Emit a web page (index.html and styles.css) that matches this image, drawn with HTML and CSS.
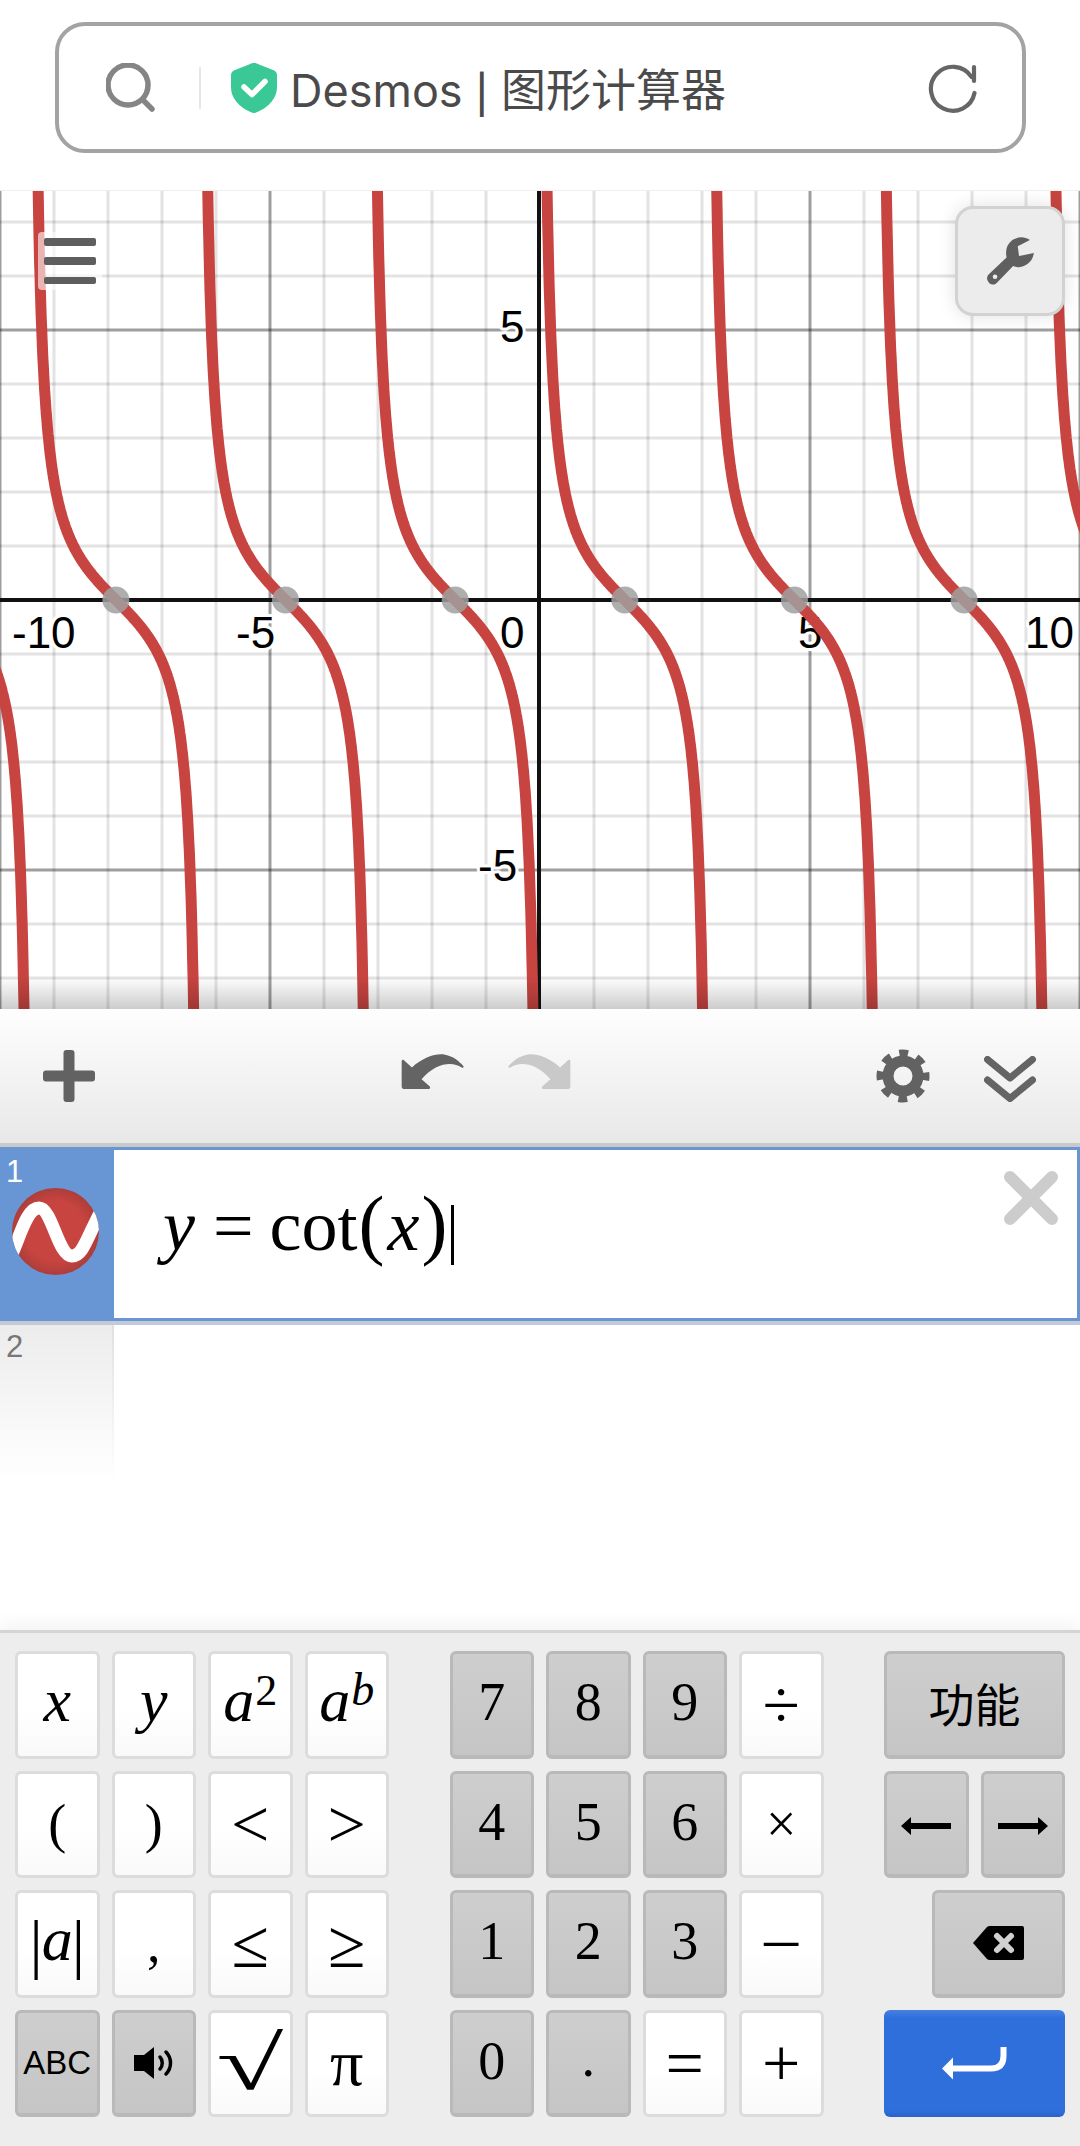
FILE: index.html
```html
<!DOCTYPE html>
<html lang="zh">
<head>
    <meta charset="UTF-8">
    <meta name="viewport" content="width=device-width, initial-scale=1.0">
    <title>Desmos | 图形计算器</title>
    <link rel="stylesheet" href="styles.css">
</head>
<body>
    <div class="top-bar">
        <div class="search-box">
            <svg class="icon-search" viewBox="0 0 50 50"><circle cx="22" cy="22" r="20" /><path d="M37 37 L46 46" /></svg>
            <div class="search-divider"></div>
            <svg class="icon-shield" viewBox="0 0 46 50">
                <path d="M23 0 C25 0 26 .5 28 1.5 L42 7 C44.5 8 46 9.5 46 12 L46 24 C46 37 35 46 24.5 49.7 C23.5 50 22.5 50 21.5 49.7 C11 46 0 37 0 24 L0 12 C0 9.5 1.5 8 4 7 L18 1.5 C20 .5 21 0 23 0Z" />
                <polyline points="13,24 21,31.5 34,18.5" />
            </svg>
            <div class="search-text">Desmos <span class="search-pipe">|</span> 图形计算器</div>
            <svg class="icon-refresh" viewBox="0 0 50 52"><path d="M47.5 31 A22 22 0 1 1 44.5 15" /><path d="M47 5 V19" /></svg>
        </div>
    </div>

    <div class="graph" id="graph">
        <div class="menu-btn">
            <span></span><span></span><span></span>
        </div>
        <div class="wrench-btn">
            <svg class="icon-wrench" viewBox="314 672 148 152">
                <path d="M322 788 L376 737 C371 712 380 692 398 682 C414 673 432 674 447 684 L410 703 L414 733 L459 724 C456 745 442 760 424 765 C414 768 404 767 396 763 L346 815 C338 823 328 820 322 813 C315 805 315 796 322 788Z" />
                <circle cx="341" cy="796" r="7" />
            </svg>
        </div>
    </div>

    <div class="toolbar">
        <svg class="icon-plus" viewBox="0 0 52 52"><rect x="20.5" y="0" width="11" height="52" rx="3" /><rect x="0" y="20.5" width="52" height="11" rx="3" /></svg>
        <svg class="icon-undo" viewBox="60 72 190 110"><path d="M68 92 L93 115 C125 85 165 72 190 76 C215 80 235 95 249 112 C249 116 245 117 243 115 C215 95 165 100 122 150 L147 172 C149 176 147 180 143 180 L70 180 C65 180 62 176 62 172 L62 96 C62 92 65 90 68 92Z" /></svg>
        <svg class="icon-redo" viewBox="60 72 190 110"><path d="M68 92 L93 115 C125 85 165 72 190 76 C215 80 235 95 249 112 C249 116 245 117 243 115 C215 95 165 100 122 150 L147 172 C149 176 147 180 143 180 L70 180 C65 180 62 176 62 172 L62 96 C62 92 65 90 68 92Z" /></svg>
        <svg class="icon-gear" viewBox="0 0 54 54">
            <circle class="gear-body" cx="27" cy="27" r="15" />
            <circle class="gear-teeth" cx="27" cy="27" r="23" />
        </svg>
        <svg class="icon-chevrons" viewBox="0 0 52 46">
            <polyline points="3.5,3.5 26,22 48.5,3.5" />
            <polyline points="3.5,24 26,42.5 48.5,24" />
        </svg>
    </div>

    <div class="expressions">
        <div class="expr-row expr-active">
            <div class="expr-tab">
                <div class="expr-num">1</div>
                <svg class="expr-logo" viewBox="0 0 87 87">
                    <defs>
                        <radialGradient id="logoFill">
                            <stop offset="70%" stop-color="#c74440" />
                            <stop offset="100%" stop-color="#ad3d3a" />
                        </radialGradient>
                        <clipPath id="logoClip"><circle cx="43.5" cy="43.5" r="43.5" /></clipPath>
                    </defs>
                    <circle cx="43.5" cy="43.5" r="43.5" fill="url(#logoFill)" />
                    <path clip-path="url(#logoClip)" d="M-2 70 C8 50 14 20 27 20 C40 20 46 68 60 68 C72 68 76 45 92 18" />
                </svg>
            </div>
            <div class="expr-body">
                <div class="math">
                    <i>y</i><span class="math-eq">=</span><span>cot</span><span class="math-paren math-open">(</span><i>x</i><span class="math-paren math-close">)</span><span class="math-cursor"></span>
                </div>
                <svg class="icon-close" viewBox="0 0 54 54"><path d="M6 6 L48 48 M48 6 L6 48" /></svg>
            </div>
        </div>
        <div class="expr-row expr-empty">
            <div class="expr-tab">
                <div class="expr-num">2</div>
            </div>
            <div class="expr-body"></div>
        </div>
    </div>

    <div class="keypad">
        <div class="key-group key-group-4">
            <div class="key key-light"><i>x</i></div>
            <div class="key key-light"><i>y</i></div>
            <div class="key key-light"><i>a</i><sup>2</sup></div>
            <div class="key key-light"><i>a</i><sup><i>b</i></sup></div>

            <div class="key key-light">(</div>
            <div class="key key-light">)</div>
            <div class="key key-light key-op">&lt;</div>
            <div class="key key-light key-op">&gt;</div>

            <div class="key key-light key-abs"><span>|</span><i>a</i><span>|</span></div>
            <div class="key key-light">,</div>
            <div class="key key-light key-op">≤</div>
            <div class="key key-light key-op">≥</div>

            <div class="key key-dark key-abc">ABC</div>
            <div class="key key-dark">
                <svg class="icon-speaker" viewBox="0 0 40 32">
                    <path class="speaker-cone" d="M0 8 H10 L20 0 V32 L10 24 H0Z" />
                    <path class="speaker-wave" d="M26 10 C29 13 29 19 26 22 M32 5 C38 11 38 21 32 27" />
                </svg>
            </div>
            <div class="key key-light key-sqrt"><span>√</span></div>
            <div class="key key-light key-pi">π</div>
        </div>

        <div class="key-group key-group-4">
            <div class="key key-dark key-num">7</div>
            <div class="key key-dark key-num">8</div>
            <div class="key key-dark key-num">9</div>
            <div class="key key-light key-op">÷</div>

            <div class="key key-dark key-num">4</div>
            <div class="key key-dark key-num">5</div>
            <div class="key key-dark key-num">6</div>
            <div class="key key-light key-times">×</div>

            <div class="key key-dark key-num">1</div>
            <div class="key key-dark key-num">2</div>
            <div class="key key-dark key-num">3</div>
            <div class="key key-light key-op key-minus"><span>−</span></div>

            <div class="key key-dark key-num">0</div>
            <div class="key key-dark key-num key-dot">.</div>
            <div class="key key-light key-op">=</div>
            <div class="key key-light key-op">+</div>
        </div>

        <div class="key-group key-group-2">
            <div class="key key-dark key-wide key-func">功能</div>

            <div class="key key-dark">
                <svg class="icon-arrow" viewBox="0 0 50 20"><path d="M0 10 L10 1 V7 H50 V13 H10 V19Z" /></svg>
            </div>
            <div class="key key-dark">
                <svg class="icon-arrow" viewBox="0 0 50 20"><path d="M50 10 L40 1 V7 H0 V13 H40 V19Z" /></svg>
            </div>

            <div class="key key-dark key-backspace">
                <svg class="icon-backspace" viewBox="0 0 51 34">
                    <path d="M0 17 L14 1 Q15 0 17 0 H49 Q51 0 51 2 V32 Q51 34 49 34 H17 Q15 34 14 33Z" />
                    <path class="backspace-x" d="M24 10 L38 24 M38 10 L24 24" />
                </svg>
            </div>

            <div class="key key-enter key-wide">
                <svg class="icon-enter" viewBox="0 0 65 33">
                    <path class="enter-line" d="M61.5 0 V9 Q61.5 21.5 49 21.5 H8" />
                    <path class="enter-head" d="M0 21.5 L11 10.5 V32.5Z" />
                </svg>
            </div>
        </div>
    </div>

    <script src="graph.js"></script>
</body>
</html>
```

FILE: styles.css
```css
* {
    margin: 0;
    padding: 0;
    box-sizing: border-box;
}

html, body {
    height: 2146px;
    overflow: hidden;
}

body {
    display: flex;
    flex-direction: column;
    background: #ffffff;
    font-family: "Liberation Serif", "Noto Sans CJK SC", serif;
    color: #000000;
}

/* browser address bar */
.top-bar {
    height: 190px;
    padding: 22px 54px 0 55px;
    flex-shrink: 0;
}

.search-box {
    height: 131px;
    border: 4px solid #a3a3a3;
    border-radius: 30px;
    display: flex;
    align-items: center;
    padding-left: 47px;
}

.icon-search {
    width: 50px;
    height: 50px;
    fill: none;
    stroke: #858585;
    stroke-width: 5.5;
    stroke-linecap: round;
}

.search-divider {
    width: 2px;
    height: 42px;
    margin-left: 43px;
    background: #e6e6e6;
}

.icon-shield {
    width: 46px;
    height: 50px;
    margin-left: 30px;
}

.icon-shield path {
    fill: #3ac996;
}

.icon-shield polyline {
    fill: none;
    stroke: #ffffff;
    stroke-width: 5.5;
    stroke-linecap: round;
    stroke-linejoin: round;
}

.search-text {
    margin-left: 13px;
    font-family: "Inter", "Noto Sans CJK SC", sans-serif;
    font-size: 45px;
    font-weight: 400;
    color: #4a4a4a;
    white-space: nowrap;
}

.search-pipe {
    font-size: 38px;
    font-weight: 500;
    position: relative;
    top: 1px;
}

.icon-refresh {
    width: 50px;
    height: 52px;
    margin-left: auto;
    margin-right: 45px;
    fill: none;
    stroke: #666666;
    stroke-width: 4.2;
    stroke-linecap: round;
}

/* graph paper */
.graph {
    position: relative;
    height: 819px;
    flex-shrink: 0;
    overflow: hidden;
    border-top: 1px solid #eeeeee;
}

.graph svg.paper {
    display: block;
}

.graph::after {
    content: '';
    position: absolute;
    left: 0;
    right: 0;
    bottom: 0;
    height: 32px;
    background: linear-gradient(180deg, rgba(0, 0, 0, 0), rgba(0, 0, 0, 0.2));
}

.menu-btn {
    position: absolute;
    left: 38px;
    top: 41px;
    width: 64px;
    height: 58px;
    padding: 6px;
    display: flex;
    flex-direction: column;
    justify-content: space-between;
    background: rgba(255, 255, 255, 0.6);
    border-radius: 4px;
}

.menu-btn span {
    display: block;
    height: 7.5px;
    background: #5e5e5e;
    border-radius: 2px;
}

.wrench-btn {
    position: absolute;
    left: 955px;
    top: 15px;
    width: 110px;
    height: 110px;
    display: flex;
    align-items: center;
    justify-content: center;
    background: #ececec;
    border: 3px solid #d2d2d2;
    border-radius: 18px;
    box-shadow: 0 0 18px rgba(0, 0, 0, 0.12);
}

.icon-wrench {
    width: 49px;
    height: 50px;
}

.icon-wrench path {
    fill: #5f5f5f;
}

.icon-wrench circle {
    fill: #ececec;
}

/* expression list toolbar */
.toolbar {
    height: 138px;
    flex-shrink: 0;
    display: flex;
    align-items: center;
    background: linear-gradient(180deg, #fefefe, #e8e8e8);
    border-bottom: 4px solid #c9c9c9;
}

.icon-plus {
    width: 52px;
    height: 52px;
    margin-left: 43px;
    fill: #626262;
}

.icon-undo,
.icon-redo {
    width: 63px;
    height: 37px;
    margin-bottom: 9px;
}

.icon-undo {
    margin-left: 306px;
    fill: #646464;
}

.icon-redo {
    margin-left: 44px;
    fill: #c9c9c9;
    transform: scaleX(-1);
}

.icon-gear {
    width: 54px;
    height: 54px;
    margin-left: 305px;
    fill: none;
    stroke: #626262;
}

.gear-body {
    stroke-width: 11;
}

.gear-teeth {
    stroke-width: 7;
    stroke-dasharray: 9 9.06;
    stroke-dashoffset: 4.5;
}

.icon-chevrons {
    width: 52px;
    height: 46px;
    margin-left: 54px;
    margin-top: 6px;
    fill: none;
    stroke: #646464;
    stroke-width: 7;
    stroke-linecap: round;
    stroke-linejoin: round;
}

/* expressions */
.expressions {
    flex: 1;
    display: flex;
    flex-direction: column;
}

.expr-row {
    display: flex;
}

.expr-active {
    height: 178px;
    background: #6895d4;
    border-bottom: 4px solid #c2cad8;
    padding: 3px 3px 3px 0;
}

.expr-active .expr-tab {
    width: 114px;
    margin-top: -3px;
    position: relative;
}

.expr-active .expr-body {
    flex: 1;
    background: #ffffff;
    position: relative;
    padding-left: 49px;
}

.expr-num {
    font-family: "Liberation Sans", sans-serif;
    font-size: 31px;
    line-height: 30px;
    padding: 10px 0 0 6px;
    color: #ffffff;
}

.expr-logo {
    position: absolute;
    left: 12px;
    top: 41px;
    width: 87px;
    height: 87px;
}

.expr-logo path {
    fill: none;
    stroke: #ffffff;
    stroke-width: 13;
}

.expr-empty {
    height: 155px;
}

.expr-empty .expr-tab {
    width: 114px;
    background: linear-gradient(180deg, #ececec, #ffffff);
    border-right: 2px solid #e4e4e4;
    border-image: linear-gradient(180deg, #e0e0e0, #ffffff) 1;
}

.expr-empty .expr-num {
    color: #777777;
    padding-top: 7px;
}

.math {
    display: flex;
    align-items: baseline;
    height: 100%;
    padding-top: 24px;
    font-size: 72px;
    line-height: 100px;
    white-space: nowrap;
}

.math-eq {
    margin: 0 16px 0 18px;
}

.math-paren {
    font-size: 78px;
}

.math-open {
    margin: 0 3px 0 1px;
}

.math-close {
    margin: 0 4px 0 2px;
}

.math-cursor {
    width: 3px;
    height: 60px;
    background: #000000;
    align-self: center;
    margin-bottom: 22px;
}

.icon-close {
    position: absolute;
    left: 890px;
    top: 21px;
    width: 54px;
    height: 54px;
    fill: none;
    stroke: #cccccc;
    stroke-width: 12;
    stroke-linecap: round;
}

/* math keypad */
.keypad {
    height: 516px;
    flex-shrink: 0;
    display: flex;
    justify-content: space-between;
    padding: 18px 15px 0 15px;
    background: #ededed;
    border-top: 3px solid #d5d5d5;
    box-shadow: 0 -6px 16px rgba(0, 0, 0, 0.05);
}

.key-group {
    display: grid;
    gap: 12px;
    grid-auto-rows: 107.5px;
    align-content: start;
}

.key-group-4 {
    grid-template-columns: repeat(4, 84.5px);
}

.key-group-2 {
    grid-template-columns: repeat(2, 84.5px);
}

.key {
    display: flex;
    align-items: center;
    justify-content: center;
    border-radius: 6px;
    font-size: 54px;
    line-height: 1;
    color: #000000;
}

.key-light {
    background: linear-gradient(180deg, #ffffff 55%, #f9f9f9);
    border: 3px solid #dcdcdc;
}

.key-dark {
    background: linear-gradient(180deg, #cecece, #c5c5c5);
    border: 3px solid #b9b9b9;
    border-bottom-width: 4px;
}

.key-num {
    padding-bottom: 4px;
}

.key-dot {
    padding-bottom: 10px;
}

.key i {
    font-size: 62px;
    position: relative;
    top: -5px;
}

.key sup {
    font-size: 44px;
    line-height: 0;
    position: relative;
    top: -14px;
    margin-left: 1px;
}

.key sup i {
    font-size: 46px;
    top: 0;
}

.key-op {
    font-size: 68px;
}

.key-minus span {
    display: inline-block;
    transform: scaleX(1.1);
}

.key-times {
    font-size: 54px;
}

.key-abs span {
    font-size: 66px;
    margin: 0 -1px;
    font-weight: 300;
}

.key-abc {
    font-family: "Liberation Sans", sans-serif;
    font-size: 33px;
}

.key-sqrt span {
    display: inline-block;
    font-size: 76px;
    transform: scaleX(1.6);
}

.key-pi {
    font-size: 66px;
}

.key-wide {
    grid-column: span 2;
}

.key-func {
    font-family: "Noto Sans CJK SC", sans-serif;
    font-size: 46px;
    padding-bottom: 4px;
}

.key-backspace {
    grid-column: span 2;
    justify-self: end;
    width: 133px;
}

.key-enter {
    background: linear-gradient(180deg, #4a80e0 0, #2f6fdc 8px, #2f6fdc 94%, #2a62c8);
    border-radius: 6px;
}

.icon-speaker {
    width: 40px;
    height: 32px;
}

.speaker-cone {
    fill: #000000;
}

.speaker-wave {
    fill: none;
    stroke: #000000;
    stroke-width: 3.5;
    stroke-linecap: round;
}

.icon-arrow {
    width: 50px;
    height: 20px;
    margin-top: 5px;
    fill: #000000;
}

.icon-backspace {
    width: 51px;
    height: 34px;
    fill: #000000;
}

.backspace-x {
    fill: none;
    stroke: #d0d0d0;
    stroke-width: 6;
    stroke-linecap: round;
}

.icon-enter {
    width: 65px;
    height: 33px;
}

.enter-line {
    fill: none;
    stroke: #ffffff;
    stroke-width: 6;
}

.enter-head {
    fill: #ffffff;
}

/* drawn by graph.js */
.grid-minor {
    stroke: rgba(0, 0, 0, 0.11);
    stroke-width: 3;
}

.grid-major {
    stroke: rgba(0, 0, 0, 0.38);
    stroke-width: 3;
}

.axis {
    stroke: #111111;
    stroke-width: 4;
}

.curve {
    fill: none;
    stroke: #c74440;
    stroke-width: 11;
    stroke-linejoin: round;
}

.zero-dot {
    fill: #a0a0a0;
    opacity: 0.85;
}

.tick {
    font-family: "Liberation Sans", sans-serif;
    font-size: 44px;
    fill: #000000;
    stroke: #ffffff;
    stroke-width: 6px;
    stroke-linejoin: round;
    paint-order: stroke;
}
```

FILE: graph.js
```js
// y = cot(x) on the graph paper, 54px per unit
const width = 1080;
const height = 818;
const unit = 54;
const originX = 540;
const originY = 409;

function px(x) {
    return originX + x * unit;
}

function py(y) {
    return originY - y * unit;
}

function drawGrid() {
    let out = '';
    for (let i = -10; i <= 10; i++) {
        if (i === 0) continue;
        const cls = i % 5 === 0 ? 'grid-major' : 'grid-minor';
        out += `<line class="${cls}" x1="${px(i)}" y1="0" x2="${px(i)}" y2="${height}" />`;
    }
    for (let i = -8; i <= 8; i++) {
        if (i === 0) continue;
        const cls = i % 5 === 0 ? 'grid-major' : 'grid-minor';
        out += `<line class="${cls}" x1="0" y1="${py(i)}" x2="${width}" y2="${py(i)}" />`;
    }
    return out;
}

function drawCurve() {
    let out = '';
    for (let k = -4; k <= 3; k++) {
        const points = [];
        for (let n = 1; n < 400; n++) {
            const x = (k + n / 400) * Math.PI;
            const y = 1 / Math.tan(x);
            if (Math.abs(y) < 9 && Math.abs(x) < 10.2) {
                points.push(`${px(x).toFixed(1)},${py(y).toFixed(1)}`);
            }
        }
        out += `<polyline class="curve" points="${points.join(' ')}" />`;
    }
    return out;
}

function drawZeros() {
    let out = '';
    for (let k = -3; k <= 2; k++) {
        out += `<circle class="zero-dot" cx="${px((k + 0.5) * Math.PI)}" cy="${py(0)}" r="13.5" />`;
    }
    return out;
}

function drawLabels() {
    const labels = [
        ['-10', 12, 457], ['-5', 236, 457], ['0', 500, 457], ['5', 798, 457], ['10', 1025, 457],
        ['5', 500, 151], ['-5', 478, 690]
    ];
    return labels.map(l => `<text class="tick" x="${l[1]}" y="${l[2]}">${l[0]}</text>`).join('');
}

const paper =
    `<svg class="paper" width="${width}" height="${height}" viewBox="0 0 ${width} ${height}">` +
    drawGrid() +
    `<line class="axis" x1="0" y1="${originY}" x2="${width}" y2="${originY}" />` +
    `<line class="axis" x1="${originX - 1}" y1="0" x2="${originX - 1}" y2="${height}" />` +
    drawLabels() +
    drawCurve() +
    drawZeros() +
    '</svg>';

document.getElementById('graph').insertAdjacentHTML('afterbegin', paper);
```
